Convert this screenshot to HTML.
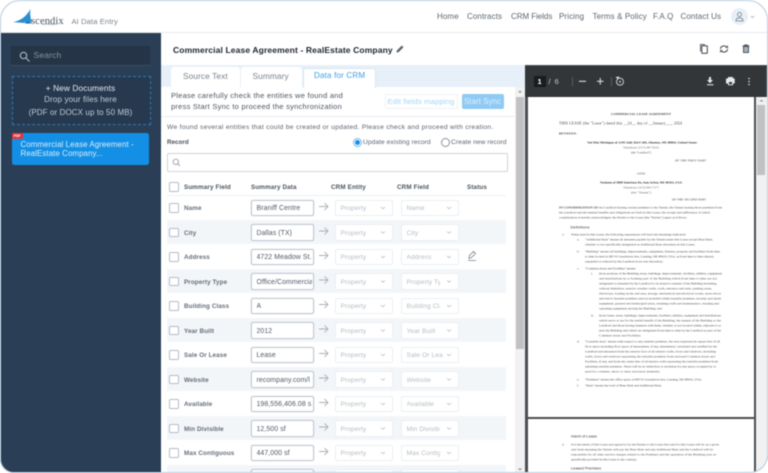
<!DOCTYPE html>
<html lang="en"><head><meta charset="utf-8"><title>AI Data Entry</title>
<style>
html,body{margin:0;padding:0;width:768px;height:473px;overflow:hidden;background:#fff}
#w{position:relative;width:768px;height:473px;overflow:hidden;background:#fff;font-family:"Liberation Sans",sans-serif;filter:blur(.45px)}
#w div,#w span.a,#w svg{position:absolute}
.t{position:absolute;white-space:nowrap;line-height:1}
.nav{top:13px;font-size:8px;color:#5d6670;letter-spacing:.1px}
.hd{top:182.5px;margin-top:2px;font-size:6.3px;font-weight:bold;color:#4a5460;letter-spacing:.13px}
.band{left:167px;width:339px;height:24.5px;background:#f3f6f9}
.cb{left:169px;width:7.5px;height:7.5px;border:1px solid #b5bcc6;border-radius:1.5px;background:#fff}
.lab{left:184px;margin-top:2px;font-size:6.3px;color:#4d5662;font-weight:bold;letter-spacing:.1px;opacity:.85}
.inp{left:251px;width:61px;height:14.5px;border:1px solid #c3c9d3;border-radius:2px;background:#fff;box-shadow:0 0 0 .3px #d5d9e0}
.val{left:256.5px;padding-top:2px;padding-bottom:3px;width:55px;overflow:hidden;font-size:6.9px;color:#505a66;letter-spacing:.1px}
.sel{width:56px;height:14.5px;border:1px solid #eceef1;border-radius:2px;background:#fff}
.sv{padding-top:2px;padding-bottom:3px;font-size:6.6px;color:#b7bcc3;letter-spacing:.1px;overflow:hidden}
.line{left:167px;width:339px;height:1px;background:#edf0f3}
</style></head><body><div id="w">

<!-- header -->
<svg style="left:12px;top:8px" width="24" height="18" viewBox="0 0 24 18"><path d="M1 14 C8 13 14 9 18.500 1 C17.500 7 19 11 20 15 C17 13 15 13.500 12 15 C8 14.500 4 14.500 1 14Z" fill="#2a8fd0"/><path d="M13 15 C15 13 17 13 19 15 L19 15.500 L13 15.500Z" fill="#1d6aa8"/></svg>
<span class="t" style="left:31px;top:15.500px;font:10.5px 'Liberation Serif',serif;color:#45535f;letter-spacing:.1px">scendix</span>
<span class="t" style="left:41px;top:24px;font-size:2.6px;color:#7a848e;letter-spacing:.05px">Technologies</span>
<span class="t" style="left:71.500px;top:17.500px;font-size:7.600px;color:#7b848d;letter-spacing:.1px">AI Data Entry</span>

<span class="t nav" style="left:437px">Home</span>
<span class="t nav" style="left:467px">Contracts</span>
<span class="t nav" style="left:511px;letter-spacing:-.05px">CRM Fields</span>
<span class="t nav" style="left:559px">Pricing</span>
<span class="t nav" style="left:592.500px">Terms &amp; Policy</span>
<span class="t nav" style="left:653px">F.A.Q</span>
<span class="t nav" style="left:680.500px">Contact Us</span>
<div style="left:731px;top:8px;width:17px;height:17px;border-radius:50%;background:#e9eff7"></div>
<svg style="left:734px;top:11px" width="11" height="11" viewBox="0 0 11 11" fill="none" stroke="#76808c" stroke-width=".8"><circle cx="5.500" cy="3.500" r="2"/><path d="M2 10 C2 7.500 3.500 6.800 5.500 6.800 C7.500 6.800 9 7.500 9 10 Z"/></svg>
<svg style="left:750px;top:15px" width="5" height="4" viewBox="0 0 5 4" fill="none" stroke="#a0a8b0" stroke-width=".7"><path d="M.8 1 L2.500 2.800 L4.200 1"/></svg>
<div style="left:0;top:32px;width:768px;height:1px;background:#e8ebef"></div>

<!-- sidebar -->
<div style="left:0;top:33px;width:160.500px;height:440px;background:#2a3f56"></div>
<div style="left:11px;top:46px;width:139px;height:20px;background:#253446;border-bottom:1px solid #3a4d61;box-sizing:border-box"></div>
<svg style="left:18px;top:50px" width="13" height="13" viewBox="0 0 13 13" fill="none" stroke="#a9b3bd" stroke-width="1.200"><circle cx="5.500" cy="5.500" r="3.200"/><path d="M8 8 L11.500 11.500"/></svg>
<span class="t" style="left:33.500px;top:51px;font-size:8.500px;color:#8793a0;letter-spacing:.15px">Search</span>
<div style="left:11.500px;top:76px;width:137px;height:47px;border:1px dashed #2f77b0;background:#27394e;box-sizing:content-box"></div>
<span class="t" style="left:0;width:161px;text-align:center;top:83.500px;font-size:8.300px;color:#e4e9ee;letter-spacing:.1px">+ New Documents</span>
<span class="t" style="left:0;width:161px;text-align:center;top:96px;font-size:8.100px;color:#bfccd8;letter-spacing:.1px">Drop your files here</span>
<span class="t" style="left:0;width:161px;text-align:center;top:109px;font-size:8px;color:#bfccd8;letter-spacing:.1px">(PDF or DOCX up to 50 MB)</span>
<div style="left:12px;top:133px;width:137px;height:32px;background:#1390e5;border-radius:2.500px"></div>
<div style="left:12px;top:133px;width:11px;height:6px;background:#e5343c;border-radius:1px 0 1px 0"></div>
<span class="t" style="left:13.700px;top:134.500px;font-size:3.400px;font-weight:bold;color:#fff">PDF</span>
<span class="t" style="left:20.500px;top:140.500px;font-size:7.900px;color:#d9edfb;letter-spacing:.08px">Commercial Lease Agreement -</span>
<span class="t" style="left:20.500px;top:150px;font-size:7.900px;color:#d9edfb;letter-spacing:.08px">RealEstate Company...</span>

<!-- title row -->
<span class="t" style="left:173px;top:45.500px;font-size:8.500px;font-weight:bold;color:#20262d;letter-spacing:.13px">Commercial Lease Agreement - RealEstate Company</span>
<svg style="left:395px;top:44px" width="10" height="10" viewBox="0 0 10 10"><path d="M1.500 8.500 L1.800 6.500 L6.800 1.500 L8.500 3.200 L3.500 8.200Z" fill="#5c6670"/></svg>
<svg style="left:698px;top:43px" width="11" height="12" viewBox="0 0 11 12"><path d="M2 1 H7 V2 H3 V8.500 H2Z" fill="#5b6570"/><rect x="3.800" y="2.800" width="5.500" height="7.500" rx=".5" fill="#fff" stroke="#4b555f" stroke-width="1.100"/></svg>
<svg style="left:719px;top:44px" width="10" height="10" viewBox="0 0 10 10" fill="none" stroke="#3f4850" stroke-width="1"><path d="M1.500 5 A3.500 3 0 0 1 7.700 3"/><path d="M8.500 5 A3.500 3 0 0 1 2.300 7"/><path d="M8.600 1.500 V3.600 H6.500 M1.400 8.500 V6.400 H3.500" stroke-width=".8"/></svg>
<svg style="left:741px;top:44px" width="10" height="10" viewBox="0 0 10 10" fill="none" stroke="#4f5963" stroke-width="1"><path d="M1.500 2 H8.500 M3.500 2 V1 H6.500 V2"/><rect x="2.500" y="2.500" width="5" height="6" fill="#a9b0b8"/></svg>

<!-- tab band -->
<div style="left:161px;top:65px;width:364px;height:22px;background:#e7f0f9"></div>
<div style="left:171px;top:67px;width:69px;height:20px;background:#fff;border-radius:3px 3px 0 0"></div>
<div style="left:241px;top:67px;width:61px;height:20px;background:#fff;border-radius:3px 3px 0 0"></div>
<div style="left:303px;top:68px;width:73px;height:20px;background:#fff;border:1px solid #d7e6f3;border-bottom:0;border-radius:3px 3px 0 0;box-sizing:border-box"></div>
<span class="t" style="left:183px;top:72px;font-size:8.300px;color:#79828c;letter-spacing:.1px">Source Text</span>
<span class="t" style="left:252.500px;top:72px;font-size:8.300px;color:#79828c;letter-spacing:.1px">Summary</span>
<span class="t" style="left:314px;top:72px;font-size:8.100px;color:#3f9fe6;letter-spacing:.15px">Data for CRM</span>

<!-- notice -->
<span class="t" style="left:171px;top:92px;font-size:7.500px;color:#4c5560;letter-spacing:.25px">Please carefully check the entities we found and</span>
<span class="t" style="left:171px;top:102.500px;font-size:7.500px;color:#4c5560;letter-spacing:.25px">press Start Sync to proceed the synchronization</span>
<div style="left:385px;top:94px;width:73px;height:15px;border:1px solid #eef2f6;border-radius:2px;box-sizing:border-box"></div>
<span class="t" style="left:387.500px;top:97.500px;font-size:7.700px;color:#a4d4f6;letter-spacing:.1px">Edit fields mapping</span>
<div style="left:462px;top:94px;width:42px;height:15px;background:#90caf4;border-radius:2px"></div>
<span class="t" style="left:464px;top:97.500px;font-size:7.800px;color:#ddf0fc;letter-spacing:.1px">Start Sync</span>
<div style="left:161px;top:116px;width:354px;height:1px;background:#e9ecef"></div>

<span class="t" style="left:167px;top:125px;font-size:6.700px;color:#5a636e;letter-spacing:.3px">We found several entities that could be created or updated. Please check and proceed with creation.</span>
<span class="t" style="left:167px;top:140px;font-size:6.300px;font-weight:bold;color:#4a5460">Record</span>
<div style="left:352.500px;top:137.500px;width:7px;height:7px;border:1px solid #74b7ea;border-radius:50%;background:#fff"></div>
<div style="left:354.500px;top:139.500px;width:5px;height:5px;border-radius:50%;background:#1390e5"></div>
<span class="t" style="left:363px;top:140px;font-size:6.600px;color:#5d6670;letter-spacing:.08px">Update existing record</span>
<div style="left:440.500px;top:137.500px;width:7px;height:7px;border:1px solid #8b939c;border-radius:50%;background:#fff"></div>
<span class="t" style="left:451px;top:140px;font-size:6.600px;color:#5d6670;letter-spacing:.08px">Create new record</span>
<div style="left:167px;top:153px;width:341px;height:19px;border:1px solid #cfd4da;border-radius:2px;box-sizing:border-box"></div>
<svg style="left:172px;top:158px" width="9" height="9" viewBox="0 0 9 9" fill="none" stroke="#8a929b" stroke-width=".8"><circle cx="3.800" cy="3.800" r="2.700"/><path d="M5.800 5.800 L8 8"/></svg>

<!-- table header -->
<div class="cb" style="top:182px"></div>
<span class="t hd" style="left:184px">Summary Field</span>
<span class="t hd" style="left:251px">Summary Data</span>
<span class="t hd" style="left:331px">CRM Entity</span>
<span class="t hd" style="left:397px">CRM Field</span>
<span class="t hd" style="left:467px">Status</span>
<div class="line" style="top:195px"></div>

<!-- row bands -->
<div class="band" style="top:219.500px"></div>
<div class="band" style="top:268.500px"></div>
<div class="band" style="top:317.500px"></div>
<div class="band" style="top:366.500px"></div>
<div class="band" style="top:415.500px"></div>
<div class="band" style="top:464.500px"></div>

<!-- rows -->
<svg style="left:0;top:0;z-index:1" width="768" height="473" viewBox="0 0 768 473" fill="none" stroke="#aab1b9" stroke-width=".9">
<g id="ar">
<path d="M319 206.500H328M324.500 203L328 206.500L324.500 210"/>
<path d="M319 231H328M324.500 227.500L328 231L324.500 234.500"/>
<path d="M319 255.500H328M324.500 252L328 255.500L324.500 259"/>
<path d="M319 280H328M324.500 276.500L328 280L324.500 283.500"/>
<path d="M319 304.500H328M324.500 301L328 304.500L324.500 308"/>
<path d="M319 329H328M324.500 325.500L328 329L324.500 332.500"/>
<path d="M319 353.500H328M324.500 350L328 353.500L324.500 357"/>
<path d="M319 378H328M324.500 374.500L328 378L324.500 381.500"/>
<path d="M319 402.500H328M324.500 399L328 402.500L324.500 406"/>
<path d="M319 427H328M324.500 423.500L328 427L324.500 430.500"/>
<path d="M319 451.500H328M324.500 448L328 451.500L324.500 455"/>
</g>
<g stroke="#b5bbc2" stroke-width=".7">
<path d="M381 207L383 208.800L385 207M447 207L449 208.800L451 207"/>
<path d="M381 231.500L383 233.300L385 231.500M447 231.500L449 233.300L451 231.500"/>
<path d="M381 256L383 257.800L385 256M447 256L449 257.800L451 256"/>
<path d="M381 280.500L383 282.300L385 280.500M447 280.500L449 282.300L451 280.500"/>
<path d="M381 305L383 306.800L385 305M447 305L449 306.800L451 305"/>
<path d="M381 329.500L383 331.300L385 329.500M447 329.500L449 331.300L451 329.500"/>
<path d="M381 354L383 355.800L385 354M447 354L449 355.800L451 354"/>
<path d="M381 378.500L383 380.300L385 378.500M447 378.500L449 380.300L451 378.500"/>
<path d="M381 403L383 404.800L385 403M447 403L449 404.800L451 403"/>
<path d="M381 427.500L383 429.300L385 427.500M447 427.500L449 429.300L451 427.500"/>
<path d="M381 452L383 453.800L385 452M447 452L449 453.800L451 452"/>
</g>
<path d="M469 258.500L469.500 255.500L473.500 251.500L475.500 253.500L471.500 257.500ZM468 260.500H476" stroke="#7a838d" stroke-width=".8"/>
</svg>

<div class="cb" style="top:203px"></div><span class="t lab" style="top:204px">Name</span><div class="inp" style="top:199.500px"></div><span class="t val" style="top:204px">Braniff Centre</span><div class="sel" style="left:335px;top:199.500px"></div><span class="t sv" style="left:340.500px;top:204px">Property</span><div class="sel" style="left:401px;top:199.500px"></div><span class="t sv" style="left:406.500px;top:204px;width:38px">Name</span>
<div class="cb" style="top:227.500px"></div><span class="t lab" style="top:228.500px">City</span><div class="inp" style="top:224px"></div><span class="t val" style="top:228.500px">Dallas (TX)</span><div class="sel" style="left:335px;top:224px"></div><span class="t sv" style="left:340.500px;top:228.500px">Property</span><div class="sel" style="left:401px;top:224px"></div><span class="t sv" style="left:406.500px;top:228.500px;width:38px">City</span>
<div class="cb" style="top:252px"></div><span class="t lab" style="top:253px">Address</span><div class="inp" style="top:248.500px"></div><span class="t val" style="top:253px">4722 Meadow St.</span><div class="sel" style="left:335px;top:248.500px"></div><span class="t sv" style="left:340.500px;top:253px">Property</span><div class="sel" style="left:401px;top:248.500px"></div><span class="t sv" style="left:406.500px;top:253px;width:38px">Address</span>
<div class="cb" style="top:276.500px"></div><span class="t lab" style="top:277.500px">Property Type</span><div class="inp" style="top:273px"></div><span class="t val" style="top:277.500px">Office/Commercial</span><div class="sel" style="left:335px;top:273px"></div><span class="t sv" style="left:340.500px;top:277.500px">Property</span><div class="sel" style="left:401px;top:273px"></div><span class="t sv" style="left:406.500px;top:277.500px;width:33px">Property Type</span>
<div class="cb" style="top:301px"></div><span class="t lab" style="top:302px">Building Class</span><div class="inp" style="top:297.500px"></div><span class="t val" style="top:302px">A</span><div class="sel" style="left:335px;top:297.500px"></div><span class="t sv" style="left:340.500px;top:302px">Property</span><div class="sel" style="left:401px;top:297.500px"></div><span class="t sv" style="left:406.500px;top:302px;width:33px">Building Class</span>
<div class="cb" style="top:325.500px"></div><span class="t lab" style="top:326.500px">Year Built</span><div class="inp" style="top:322px"></div><span class="t val" style="top:326.500px">2012</span><div class="sel" style="left:335px;top:322px"></div><span class="t sv" style="left:340.500px;top:326.500px">Property</span><div class="sel" style="left:401px;top:322px"></div><span class="t sv" style="left:406.500px;top:326.500px;width:38px">Year Built</span>
<div class="cb" style="top:350px"></div><span class="t lab" style="top:351px">Sale Or Lease</span><div class="inp" style="top:346.500px"></div><span class="t val" style="top:351px">Lease</span><div class="sel" style="left:335px;top:346.500px"></div><span class="t sv" style="left:340.500px;top:351px">Property</span><div class="sel" style="left:401px;top:346.500px"></div><span class="t sv" style="left:406.500px;top:351px;width:36px">Sale Or Lease</span>
<div class="cb" style="top:374.500px"></div><span class="t lab" style="top:375.500px">Website</span><div class="inp" style="top:371px"></div><span class="t val" style="top:375.500px">recompany.com/l</span><div class="sel" style="left:335px;top:371px"></div><span class="t sv" style="left:340.500px;top:375.500px">Property</span><div class="sel" style="left:401px;top:371px"></div><span class="t sv" style="left:406.500px;top:375.500px;width:38px">Website</span>
<div class="cb" style="top:399px"></div><span class="t lab" style="top:400px">Available</span><div class="inp" style="top:395.500px"></div><span class="t val" style="top:400px">198,556,406.08 s</span><div class="sel" style="left:335px;top:395.500px"></div><span class="t sv" style="left:340.500px;top:400px">Property</span><div class="sel" style="left:401px;top:395.500px"></div><span class="t sv" style="left:406.500px;top:400px;width:38px">Available</span>
<div class="cb" style="top:423.500px"></div><span class="t lab" style="top:424.500px">Min Divisible</span><div class="inp" style="top:420px"></div><span class="t val" style="top:424.500px">12,500 sf</span><div class="sel" style="left:335px;top:420px"></div><span class="t sv" style="left:340.500px;top:424.500px">Property</span><div class="sel" style="left:401px;top:420px"></div><span class="t sv" style="left:406.500px;top:424.500px;width:33px">Min Divisible</span>
<div class="cb" style="top:448px"></div><span class="t lab" style="top:449px">Max Contiguous</span><div class="inp" style="top:444.500px"></div><span class="t val" style="top:449px">447,000 sf</span><div class="sel" style="left:335px;top:444.500px"></div><span class="t sv" style="left:340.500px;top:449px">Property</span><div class="sel" style="left:401px;top:444.500px"></div><span class="t sv" style="left:406.500px;top:449px;width:33px">Max Contiguous</span>
<div class="inp" style="top:469px"></div><div class="sel" style="left:335px;top:469px"></div><div class="sel" style="left:401px;top:469px"></div>

<!-- left scrollbar -->
<div style="left:515px;top:87px;width:10px;height:386px;background:#f1f1f1"></div>
<div style="left:516px;top:97px;width:7.500px;height:252px;background:#c1c1c1"></div>
<svg style="left:515px;top:87px" width="10" height="386" viewBox="0 0 10 386" fill="#8f8f8f"><path d="M3 5.500H7L5 3.500Z"/><path d="M3 381.500H7L5 383.500Z"/></svg>

<!-- pdf viewer -->
<div style="left:525px;top:65px;width:243px;height:408px;background:#4a4e52"></div>
<div style="left:525px;top:66px;width:241px;height:31px;background:#323639"></div>
<div style="left:534px;top:76px;width:12px;height:10.500px;background:#191b1c"></div>
<span class="t" style="left:537.500px;top:77.500px;font-size:7.500px;color:#fff;font-weight:bold">1</span>
<span class="t" style="left:548.500px;top:77.500px;font-size:7.500px;color:#c8cacc;letter-spacing:1px">/ 6</span>
<div style="left:572px;top:77px;width:1px;height:9px;background:#5a5e62"></div>
<div style="left:611px;top:77px;width:1px;height:9px;background:#5a5e62"></div>
<svg style="left:525px;top:66px" width="241" height="31" viewBox="0 0 241 31">
<path d="M54 15.300H61M72 15.300H78.500M75.250 12V18.600" stroke="#d6d8d9" stroke-width="1.100" fill="none"/>
<circle cx="95" cy="15.700" r="3.500" stroke="#d6d8d9" stroke-width=".9" fill="none"/><circle cx="95" cy="15.700" r=".9" fill="#d6d8d9"/><path d="M90.500 11 L94.500 10.500 L93 13.500Z" fill="#d6d8d9"/>
<path d="M184 11H186V14H188L185 17.200L182 14H184ZM182 18.200H188.500V19.300H182Z" fill="#e8e9ea"/>
<path d="M203 12.500V11H208V12.500H209.700V17.500H208V19.300H203V17.500H201V12.500Z" fill="#e8e9ea"/><rect x="204" y="16" width="3" height="2.300" fill="#323639"/>
<circle cx="224" cy="12.500" r=".8" fill="#e8e9ea"/><circle cx="224" cy="15.500" r=".8" fill="#e8e9ea"/><circle cx="224" cy="18.500" r=".8" fill="#e8e9ea"/>
</svg>

<!-- pdf scrollbar -->
<div style="left:755.500px;top:97px;width:11px;height:376px;background:#f1f1f1"></div>
<div style="left:757px;top:105px;width:8px;height:70px;background:#c1c1c1"></div>
<svg style="left:755.500px;top:97px" width="11" height="8" viewBox="0 0 11 8"><path d="M3.500 4.500H7.500L5.500 2.500Z" fill="#9a9a9a"/></svg>

<!-- pdf pages -->
<div style="left:528px;top:97px;width:226px;height:319.500px;background:#fff"></div>
<div style="left:528px;top:418.500px;width:226px;height:54.500px;background:#fff"></div>
<svg style="left:0;top:0" width="768" height="473" viewBox="0 0 768 473" font-family="Liberation Serif, serif" font-size="3.500" fill="#3a3a3a">
<text x="611" y="115" textLength="60" font-size="3.200" font-weight="bold">COMMERCIAL LEASE AGREEMENT</text>
<text x="559" y="124.500" textLength="123" font-size="3.700">THIS LEASE (the "Lease") dated this __24__ day of __January___, 2024</text>
<text x="559" y="134.500" textLength="18" font-size="3" font-weight="bold">BETWEEN:</text>
<text x="587" y="143.500" textLength="110" font-weight="bold">Val-Mat Michigan of 2149 Jolly Rd # 200, Okemos, MI 48864, United States</text>
<text x="623" y="148.500" textLength="36" fill="#777">Telephone: (517) 487-9222</text>
<text x="631" y="153.500" textLength="20" fill="#666">(the "Landlord")</text>
<text x="675" y="161.500" textLength="31" font-size="3">OF THE FIRST PART</text>
<text x="636" y="174.500" textLength="10" font-size="3">-AND-</text>
<text x="600" y="183.500" textLength="82" font-weight="bold">Nexkem of 5889 Interface Dr, Ann Arbor, MI 48103, USA</text>
<text x="623" y="188.500" textLength="36" fill="#777">Telephone: (415) 992-7277</text>
<text x="631" y="193.500" textLength="20" fill="#666">(the "Tenant")</text>
<text x="672" y="200.500" textLength="34" font-size="3">OF THE SECOND PART</text>
<g fill="#555">
<text x="559" y="208.500" textLength="163" font-size="3.500"><tspan font-weight="bold">IN CONSIDERATION OF</tspan> the Landlord leasing certain premises to the Tenant, the Tenant leasing those premises from</text>
<text x="559" y="213.500" textLength="151">the Landlord and the mutual benefits and obligations set forth in this Lease, the receipt and sufficiency of which</text>
<text x="559" y="218.500" textLength="128">consideration is hereby acknowledged, the Parties to the Lease (the "Parties") agree as follows:</text>
<text x="570.500" y="228.500" textLength="19" font-family="Liberation Sans, sans-serif" font-size="3.800" fill="#333">Definitions</text>
<text x="562" y="235.500">1.</text><text x="571" y="235.500" textLength="115">When used in this Lease, the following expressions will have the meanings indicated:</text>
<text x="577" y="240.500">a.</text><text x="585" y="240.500" textLength="128">"Additional Rent" means all amounts payable by the Tenant under this Lease except Base Rent,</text>
<text x="585" y="245.500" textLength="110">whether or not specifically designated as Additional Rent elsewhere in this Lease;</text>
<text x="577" y="252.500">b.</text><text x="585" y="252.500" textLength="135">"Building" means all buildings, improvements, equipment, fixtures, property and facilities from time</text>
<text x="585" y="257.500" textLength="129">to time located at 685 W Greenlawn Ave, Lansing, MI 48910, USA, as from time to time altered,</text>
<text x="585" y="262.500" textLength="78">expanded or reduced by the Landlord in its sole discretion;</text>
<text x="577" y="269.500">c.</text><text x="585" y="269.500" textLength="51">"Common Areas and Facilities" means:</text>
<text x="591" y="274.500">i.</text><text x="599" y="274.500" textLength="123">those portions of the Building areas, buildings, improvements, facilities, utilities, equipment</text>
<text x="599" y="279.500" textLength="118">and installations in or forming part of the Building which from time to time are not</text>
<text x="599" y="284.500" textLength="118">designated or intended by the Landlord to be leased to tenants of the Building including,</text>
<text x="599" y="289.500" textLength="113">without limitation, exterior weather walls, roofs, entrance and exits, parking areas,</text>
<text x="599" y="294.500" textLength="122">driveways, loading docks and area, storage, mechanical and electrical rooms, areas above</text>
<text x="599" y="299.500" textLength="122">and below leasable premises and not included within leasable premises, security and alarm</text>
<text x="599" y="304.500" textLength="120">equipment, grassed and landscaped areas, retaining walls and maintenance, cleaning and</text>
<text x="599" y="309.500" textLength="63">operating equipment serving the Building; and</text>
<text x="591" y="316.500">ii.</text><text x="599" y="316.500" textLength="122">those lands, areas, buildings, improvements, facilities, utilities, equipment and installations</text>
<text x="599" y="321.500" textLength="122">which serve or are for the useful benefit of the Building, the tenants of the Building or the</text>
<text x="599" y="326.500" textLength="122">Landlord and those having business with them, whether or not located within, adjacent to or</text>
<text x="599" y="331.500" textLength="122">near the Building and which are designated from time to time by the Landlord as part of the</text>
<text x="599" y="336.500" textLength="42">Common Areas and Facilities;</text>
<text x="577" y="342.500">d.</text><text x="585" y="342.500" textLength="135">"Leasable Area" means with respect to any rentable premises, the area expressed in square feet of all</text>
<text x="585" y="347.500" textLength="132">floor space including floor space of mezzanines, if any, determined, calculated and certified by the</text>
<text x="585" y="352.500" textLength="131">Landlord and measured from the exterior face of all exterior walls, doors and windows, including</text>
<text x="585" y="357.500" textLength="130">walls, doors and windows separating the rentable premises from enclosed Common Areas and</text>
<text x="585" y="362.500" textLength="133">Facilities, if any, and from the centre line of all interior walls separating the rentable premises from</text>
<text x="585" y="367.500" textLength="131">adjoining rentable premises. There will be no deduction or exclusion for any space occupied by or</text>
<text x="585" y="372.500" textLength="75">used for columns, ducts or other structural elements;</text>
<text x="577" y="380.500">e.</text><text x="585" y="380.500" textLength="117">"Premises" means the office space at 685 W Greenlawn Ave, Lansing, MI 48910, USA.</text>
<text x="577" y="386.500">f.</text><text x="585" y="386.500" textLength="77">"Rent" means the total of Base Rent and Additional Rent.</text>
<text x="571" y="437.500" textLength="26" font-family="Liberation Sans, sans-serif" font-size="3.800" fill="#333">Intent of Lease</text>
<text x="562" y="445.500">2.</text><text x="571" y="445.500" textLength="148">It is the intent of this Lease and agreed to by the Parties to the Lease that rent for this Lease will be on a gross</text>
<text x="571" y="450.500" textLength="142">rent basis meaning the Tenant will pay the Base Rent and any Additional Rent and the Landlord will be</text>
<text x="571" y="455.500" textLength="145">responsible for all other service charges related to the Premises and the operation of the Building save as</text>
<text x="571" y="460.500" textLength="66">specifically provided in this Lease to the contrary.</text>
<text x="571" y="469.500" textLength="30" font-family="Liberation Sans, sans-serif" font-size="3.800" fill="#333">Leased Premises</text>
</g>
</svg>

<!-- frame -->
<div style="left:0;top:0;width:768px;height:473px;box-sizing:border-box;border:1.200px solid #b4cce0;border-radius:20px 20px 18px 14px;box-shadow:0 0 0 30px #fff;z-index:5"></div>
</div></body></html>
